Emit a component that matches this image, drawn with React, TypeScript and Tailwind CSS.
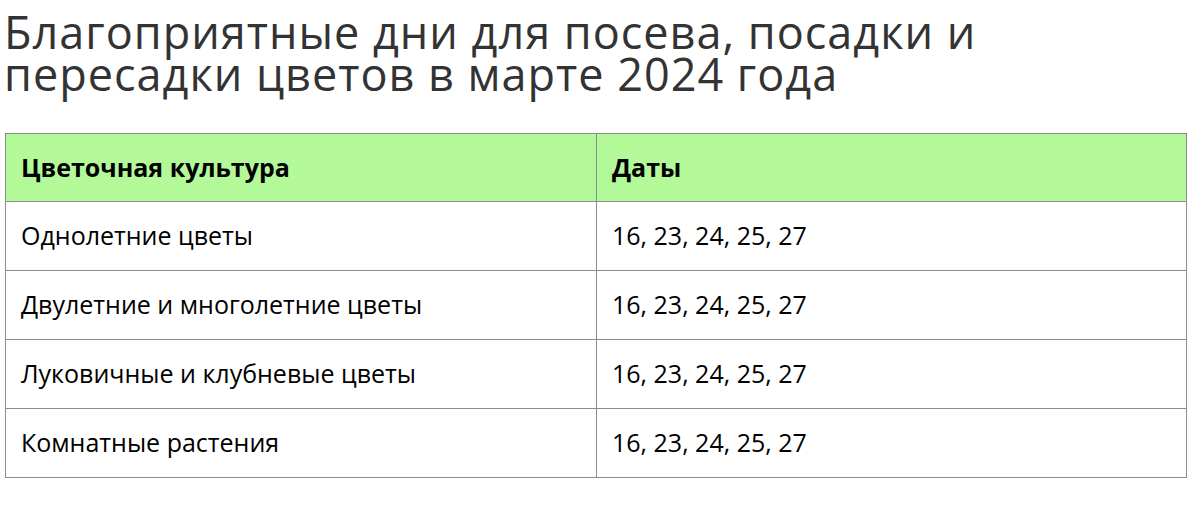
export default function App() {
  const rows = [
    ["Однолетние цветы", "16, 23, 24, 25, 27"],
    ["Двулетние и многолетние цветы", "16, 23, 24, 25, 27"],
    ["Луковичные и клубневые цветы", "16, 23, 24, 25, 27"],
    ["Комнатные растения", "16, 23, 24, 25, 27"],
  ];
  return (
    <div className="w-[1200px] h-[511px] bg-white overflow-hidden" style={{ fontFamily: '"Open Sans", sans-serif' }}>
      <h1 className="pl-[4px] pt-[11px] text-[45px] leading-[42px] tracking-[1px] text-[#333333] font-normal">
        Благоприятные дни для посева, посадки и<br />пересадки цветов в марте 2024 года
      </h1>
      <table className="ml-[5px] mt-[38px] w-[1182px] border-collapse border border-[#8c8c8c] text-[25px] text-black">
        <thead>
          <tr className="bg-[#b3f99a] h-[68px]">
            <th className="border border-[#8c8c8c] w-[591px] text-left font-bold pl-[15px]">Цветочная культура</th>
            <th className="border border-[#8c8c8c] text-left font-bold pl-[15px]">Даты</th>
          </tr>
        </thead>
        <tbody>
          {rows.map((r, i) => (
            <tr key={i} className="h-[69px]">
              <td className="border border-[#8c8c8c] pl-[15px]">{r[0]}</td>
              <td className="border border-[#8c8c8c] pl-[15px]">{r[1]}</td>
            </tr>
          ))}
        </tbody>
      </table>
    </div>
  );
}
